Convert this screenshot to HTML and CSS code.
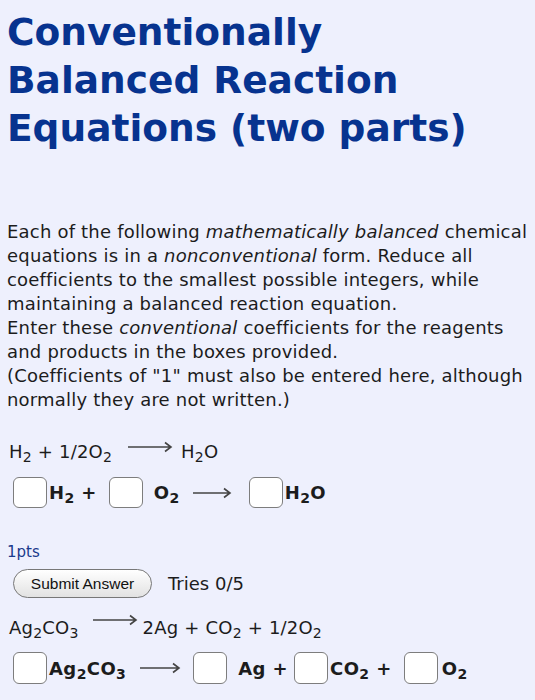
FILE: index.html
```html
<!DOCTYPE html>
<html lang="en">
<head>
    <meta charset="UTF-8">
    <meta name="viewport" content="width=device-width, initial-scale=1.0">
    <title>Conventionally Balanced Reaction Equations</title>
    <link rel="stylesheet" href="styles.css">
</head>
<body>
    <h1>Conventionally<br>Balanced Reaction<br>Equations (two parts)</h1>

    <p class="intro">
        Each of the following <em>mathematically balanced</em> chemical equations is in a <em>nonconventional</em> form. Reduce all coefficients to the smallest possible integers, while maintaining a balanced reaction equation.<br>
        Enter these <em>conventional</em> coefficients for the reagents and products in the boxes provided.<br>
        (Coefficients of "1" must also be entered here, although normally they are not written.)
    </p>

    <!-- part 1 -->
    <div class="equation">
        H<sub>2</sub> + 1/2O<sub>2</sub><svg class="arrow" width="46" height="12" viewBox="0 0 46 12"><path d="M1 6H44M38 1.5L44 6L38 10.5" /></svg>H<sub>2</sub>O
    </div>
    <div class="answer">
        <input type="text" class="coef"><b>H<sub>2</sub> +</b>
        <input type="text" class="coef gap"><b class="sp">O<sub>2</sub></b>
        <svg class="arrow-ans" width="40" height="12" viewBox="0 0 40 12"><path d="M1 6H38M32 1.5L38 6L32 10.5" /></svg>
        <input type="text" class="coef"><b>H<sub>2</sub>O</b>
    </div>

    <div class="pts">1pts</div>
    <div class="submit-row">
        <button class="btn-submit">Submit Answer</button>
        <span class="tries">Tries 0/5</span>
    </div>

    <!-- part 2 -->
    <div class="equation eq-two">
        Ag<sub>2</sub>CO<sub>3</sub><svg class="arrow" width="46" height="12" viewBox="0 0 46 12"><path d="M1 6H44M38 1.5L44 6L38 10.5" /></svg>2Ag + CO<sub>2</sub> + 1/2O<sub>2</sub>
    </div>
    <div class="answer answer-two">
        <input type="text" class="coef"><b>Ag<sub>2</sub>CO<sub>3</sub></b>
        <svg class="arrow-ans" width="42" height="12" viewBox="0 0 42 12"><path d="M1 6H40M34 1.5L40 6L34 10.5" /></svg>
        <input type="text" class="coef"><b class="sp">Ag +</b>
        <input type="text" class="coef"><b>CO<sub>2</sub> +</b>
        <input type="text" class="coef gap"><b class="last">O<sub>2</sub></b>
    </div>
</body>
</html>
```

FILE: styles.css
```css
body {
    margin: 0;
    padding: 0 7px;
    background-color: #eef0fd;
    color: #1c1c1c;
    font-family: "DejaVu Sans", Verdana, sans-serif;
    font-size: 18px;
}
h1 {
    margin: 0;
    padding-top: 8px;
    color: #07338f;
    font-size: 37.5px;
    line-height: 48px;
    font-weight: bold;
}
.intro {
    margin: 68px 0 0;
    line-height: 24px;
    letter-spacing: 0.2px;
}
sub {
    font-size: 0.78em;
    vertical-align: -0.28em;
    line-height: 0;
}

/* unbalanced equation line */
.equation {
    margin-top: 28px;
    line-height: 24px;
    padding-left: 2px;
    letter-spacing: 0.2px;
}
.arrow {
    margin: 0 8px 0 15px;
    vertical-align: 5px;
}
.eq-two .arrow {
    margin: 0 5px 0 13px;
    vertical-align: 8px;
}
.arrow path,
.arrow-ans path {
    fill: none;
    stroke: #444;
    stroke-width: 1.6;
}

/* answer row with coefficient boxes */
.answer {
    margin-top: 13px;
    display: flex;
    align-items: center;
    height: 31px;
}
.answer-two {
    margin-top: 12px;
    height: 32px;
}
.answer b {
    font-size: 18px;
    letter-spacing: 0.4px;
    margin-left: 2px;
    white-space: pre;
}
.coef {
    width: 34px;
    height: 100%;
    box-sizing: border-box;
    margin: 0 0 0 6px;
    border: 1px solid #7d7d7d;
    border-radius: 6px;
    background: #fff;
}
.coef.gap {
    margin-left: 12px;
}
.answer .sp {
    margin-left: 11px;
}
.answer .last {
    margin-left: 4px;
}
.arrow-ans {
    margin: 0 11px 0 12px;
}
.answer-two .arrow-ans {
    margin: 0 6px 0 13px;
}

.pts {
    margin-top: 34px;
    color: #1b3a8c;
    font-size: 15px;
    line-height: 20px;
}
.submit-row {
    margin-top: 7px;
    display: flex;
    align-items: center;
}
.btn-submit {
    margin-left: 6px;
    width: 139px;
    height: 29px;
    border: 1px solid #777;
    border-radius: 15px;
    background: linear-gradient(#ffffff, #e2e2e2);
    font-family: "Liberation Sans", Arial, sans-serif;
    font-size: 15.5px;
    color: #111;
}
.tries {
    margin-left: 16px;
    font-size: 18px;
}
.eq-two {
    margin-top: 16px;
}
```
